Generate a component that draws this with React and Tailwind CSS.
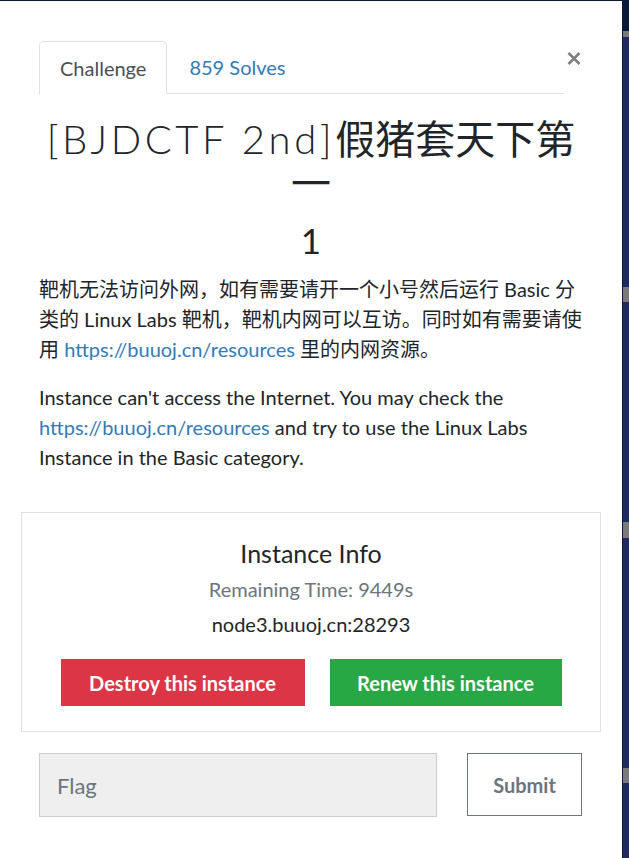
import React from 'react';

const sans = "font-['Lato','Noto_Sans_CJK_SC',sans-serif]";

const Tabs = () => (
  <div className="flex px-[39px]">
    <div className="flex-1 flex h-[53px] border-b border-[#dee2e6]">
      <div className="h-[53px] -mb-px px-[20px] flex items-center bg-white border-t border-x border-[#dee2e6] rounded-t-[5px] text-[20px] text-[#495057]">
        Challenge
      </div>
      <div className="px-[22px] flex items-center text-[20px] text-[#337ab7]">859 Solves</div>
    </div>
    <button className="w-[19px] flex justify-center pt-[11px] items-start" aria-label="Close">
      <svg width="14" height="13" viewBox="0 0 14 13">
        <path d="M1.5 1 L12.5 12 M12.5 1 L1.5 12" stroke="#7f7f7f" strokeWidth="2.6" />
      </svg>
    </button>
  </div>
);

const InstanceCard = () => (
  <div className="mx-[21px] mt-[40px] h-[220px] border border-[#dee2e6] flex flex-col items-center pt-[25px]">
    <h5 className="text-[25px] leading-[30px] text-[#212529]">Instance Info</h5>
    <p className="mt-[6px] text-[20px] leading-[30px] text-[#6c757d]">Remaining Time: 9449s</p>
    <p className="mt-[5px] text-[20px] leading-[30px] text-[#212529]">node3.buuoj.cn:28293</p>
    <div className="mt-[20px] flex gap-[25px]">
      <button className="w-[244px] h-[47px] bg-[#dc3545] text-white font-bold text-[20px]">Destroy this instance</button>
      <button className="w-[232px] h-[47px] bg-[#28a745] text-white font-bold text-[20px]">Renew this instance</button>
    </div>
  </div>
);

const FlagRow = () => (
  <div className="flex mt-[21px] pl-[39px] gap-[30px]">
    <input
      placeholder="Flag"
      className="w-[398px] h-[64px] bg-[#efefef] border border-[#cccccc] pl-[17px] text-[22px] placeholder:text-[#6c757d] outline-none"
    />
    <button className="w-[115px] h-[63px] border border-[#6c757d] bg-white text-[#6c757d] font-bold text-[20px]">Submit</button>
  </div>
);

const SideStrip = () => (
  <div className="flex-1 flex flex-col border-l border-[#0e1840]">
    <div className="h-[31px] bg-[#0a1838]" />
    <div className="h-[6px] bg-[#7a7a7a]" />
    <div className="h-[250px] bg-[#1f2a5e]" />
    <div className="h-[15px] bg-[#7a7a7a]" />
    <div className="h-[220px] bg-[#1f2a5e]" />
    <div className="h-[16px] bg-[#7a7a7a]" />
    <div className="h-[230px] bg-[#1f2a5e]" />
    <div className="h-[15px] bg-[#7a7a7a]" />
    <div className="flex-1 bg-[#1f2a5e]" />
  </div>
);

export default function App() {
  return (
    <div className={`flex h-[858px] w-[629px] overflow-hidden bg-[#0a1838] ${sans}`}>
      <div className="w-[622px] shrink-0 mt-px bg-white pt-[40px] text-[#212529]">
        <Tabs />
        <div className="px-[39px]">
          <h2 className="mt-[23px] text-center text-[40px] leading-[44px]">
            <span className="tracking-[0.09em] font-light">[BJDCTF 2nd]</span>
            <span>假猪套天下第一</span>
          </h2>
          <h3 className="mt-[14px] text-center text-[35px] leading-[42px]">1</h3>
          <div className="mt-[13px] text-[20px] leading-[30px]">
            <p>
              靶机无法访问外网，如有需要请开一个小号然后运行 Basic 分类的 Linux Labs 靶机，靶机内网可以互访。同时如有需要请使用{' '}
              <a className="text-[#337ab7]">https://buuoj.cn/resources</a> 里的内网资源。
            </p>
            <p className="mt-[18px]">
              Instance can't access the Internet. You may check the{' '}
              <a className="text-[#337ab7]">https://buuoj.cn/resources</a> and try to use the Linux Labs Instance in the
              Basic category.
            </p>
          </div>
        </div>
        <InstanceCard />
        <FlagRow />
      </div>
      <SideStrip />
    </div>
  );
}
